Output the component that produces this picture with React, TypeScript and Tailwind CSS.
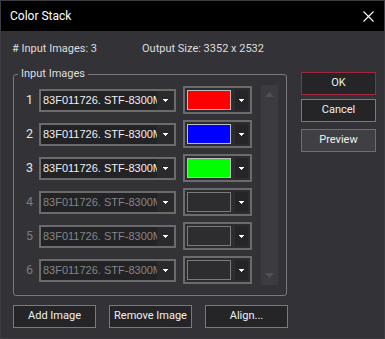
import React from "react";

const Arrow = ({ color = "#ffffff" }: { color?: string }) => (
  <svg width="5" height="3" viewBox="0 0 5 3" shapeRendering="crispEdges">
    <path d="M0 0h5v1H0z M1 1h3v1H1z M2 2h1v1H2z" fill={color} />
  </svg>
);

const rows = [
  { n: 1, color: "#ff0000", on: true },
  { n: 2, color: "#0000ff", on: true },
  { n: 3, color: "#00ff00", on: true },
  { n: 4, color: "", on: false },
  { n: 5, color: "", on: false },
  { n: 6, color: "", on: false },
];

const ui = { fontFamily: 'Roboto, "Liberation Sans", Arial, sans-serif' };
const combo = { fontFamily: '"Liberation Sans", Arial, sans-serif' };

function Row({ n, color, on }: { n: number; color: string; on: boolean }) {
  return (
    <div className="flex items-center h-[28px] pl-[12px]">
      <div
        className={
          "w-[13px] text-[12.5px] leading-[16px] " +
          (on ? "text-[#e6e6e6]" : "text-[#7c7c7c]")
        }
      >
        {n}
      </div>
      <div className="w-[137px] h-[23px] border-2 border-[#6b6b6b] bg-[#232325] flex">
        <div
          className={
            "w-[116px] overflow-hidden whitespace-nowrap pl-[2px] text-[11px] leading-[19px] " +
            (on ? "text-[#f0f0f0]" : "text-[#868686]")
          }
          style={combo}
        >
          83F011726. STF-8300M
        </div>
        <div className="flex-1 flex items-center justify-center bg-[#2a2a2c]">
          <Arrow />
        </div>
      </div>
      <div className="ml-[7px] w-[69px] h-[28px] border-2 border-[#6b6b6b] bg-[#2d2d30] flex items-center px-[2px]">
        <div
          className={
            "w-[44px] h-[20px] border " +
            (on ? "border-[#bdbdbd]" : "border-[#7a7a7a] bg-[#2d2d30]")
          }
          style={on ? { backgroundColor: color } : undefined}
        />
        <div className="ml-[4px] w-[13px] h-[20px] bg-[#252527] flex items-center justify-center">
          <Arrow />
        </div>
      </div>
    </div>
  );
}

function Btn({
  children,
  className = "",
}: {
  children: React.ReactNode;
  className?: string;
}) {
  return (
    <div
      className={
        "h-[23px] flex items-center justify-center whitespace-nowrap text-[11px] text-[#f0f0f0] border " +
        className
      }
    >
      {children}
    </div>
  );
}

export default function App() {
  return (
    <div
      className="w-[385px] h-[339px] border border-[#3d3d41] bg-[#333337] flex flex-col"
      style={ui}
    >
      <div className="h-[30px] bg-black flex items-center justify-between pl-[9px] pr-[10px] shrink-0">
        <span className="text-[12px] text-white">Color Stack</span>
        <svg width="11" height="11" viewBox="0 0 11 11">
          <path d="M0.5 0.5L10.5 10.5M10.5 0.5L0.5 10.5" stroke="#ffffff" strokeWidth="1.1" />
        </svg>
      </div>
      <div className="flex flex-col pl-[11px]">
        <div className="mt-[10px] h-[16px] flex items-center text-[11px] text-[#dedede] leading-[16px]">
          <span className="w-[130px]">
            # Input Images: 3
          </span>
          <span>Output Size: 3352 x 2532</span>
        </div>
        <div className="flex mt-[9px]">
          <fieldset className="ml-[1px] w-[274px] border border-[#7a7a7a] rounded-[3px] p-0 m-0">
            <legend className="ml-[4px] px-[3px] text-[11px] leading-[16px] text-[#dedede]">
              Input Images
            </legend>
            <div className="flex items-start pb-[10px]">
              <div className="flex flex-col gap-[6px] mt-[4px] w-[238px]">
                {rows.map((r) => (
                  <Row key={r.n} {...r} />
                ))}
              </div>
              <div className="ml-[9px] mt-[3px] w-[17px] h-[200px] bg-[#3c3c40] flex flex-col items-center justify-between py-[7px]">
                <svg width="9" height="5" viewBox="0 0 9 5">
                  <path d="M4.5 0L9 5H0z" fill="#505055" />
                </svg>
                <svg width="9" height="5" viewBox="0 0 9 5">
                  <path d="M0 0h9L4.5 5z" fill="#505055" />
                </svg>
              </div>
            </div>
          </fieldset>
          <div className="ml-[14px] mt-[6px] w-[75px] flex flex-col">
            <Btn className="border-[#a3263f] bg-[#252527]">OK</Btn>
            <Btn className="mt-[4px] border-[#7a7a7a] bg-[#252527]">Cancel</Btn>
            <Btn className="mt-[7px] border-[#6e6e6e] bg-[#3f3f44]">Preview</Btn>
          </div>
        </div>
        <div className="flex mt-[9px] gap-[13px] ml-[1px]">
          <Btn className="w-[83px] border-[#7a7a7a] bg-[#252527]">Add Image</Btn>
          <Btn className="w-[83px] border-[#7a7a7a] bg-[#252527]">Remove Image</Btn>
          <Btn className="w-[83px] border-[#7a7a7a] bg-[#252527]">Align...</Btn>
        </div>
      </div>
    </div>
  );
}
